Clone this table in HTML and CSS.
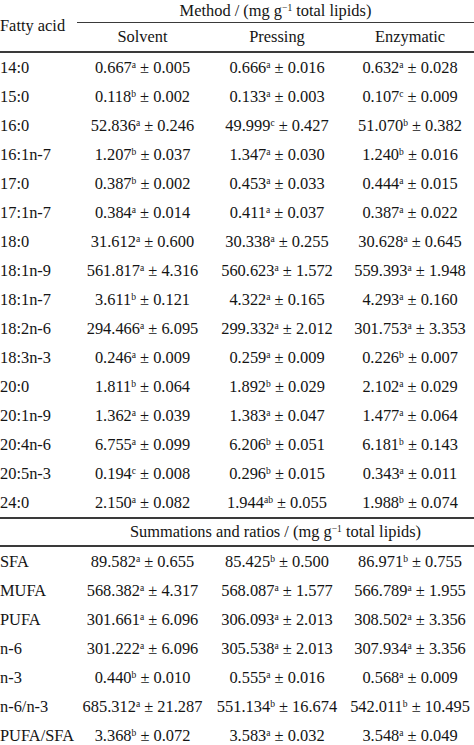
FILE: index.html
```html
<!DOCTYPE html>
<html lang="en">
<head>
<meta charset="utf-8">
<title>Fatty acid composition</title>
<link rel="stylesheet" href="styles.css">
</head>
<body>
<table class="fa-table">
  <colgroup>
    <col class="c-name">
    <col class="c-solvent">
    <col class="c-pressing">
    <col class="c-enzymatic">
  </colgroup>
  <thead>
    <tr class="head-1">
      <th rowspan="2" class="name-head">Fatty acid</th>
      <th colspan="3" class="method-head">Method / (mg g<sup>−1</sup> total lipids)</th>
    </tr>
    <tr class="head-2">
      <th>Solvent</th>
      <th>Pressing</th>
      <th>Enzymatic</th>
    </tr>
  </thead>
  <tbody>
    <tr><td>14:0</td><td>0.667<sup>a</sup> ± 0.005</td><td>0.666<sup>a</sup> ± 0.016</td><td>0.632<sup>a</sup> ± 0.028</td></tr>
    <tr><td>15:0</td><td>0.118<sup>b</sup> ± 0.002</td><td>0.133<sup>a</sup> ± 0.003</td><td>0.107<sup>c</sup> ± 0.009</td></tr>
    <tr><td>16:0</td><td>52.836<sup>a</sup> ± 0.246</td><td>49.999<sup>c</sup> ± 0.427</td><td>51.070<sup>b</sup> ± 0.382</td></tr>
    <tr><td>16:1n-7</td><td>1.207<sup>b</sup> ± 0.037</td><td>1.347<sup>a</sup> ± 0.030</td><td>1.240<sup>b</sup> ± 0.016</td></tr>
    <tr><td>17:0</td><td>0.387<sup>b</sup> ± 0.002</td><td>0.453<sup>a</sup> ± 0.033</td><td>0.444<sup>a</sup> ± 0.015</td></tr>
    <tr><td>17:1n-7</td><td>0.384<sup>a</sup> ± 0.014</td><td>0.411<sup>a</sup> ± 0.037</td><td>0.387<sup>a</sup> ± 0.022</td></tr>
    <tr><td>18:0</td><td>31.612<sup>a</sup> ± 0.600</td><td>30.338<sup>a</sup> ± 0.255</td><td>30.628<sup>a</sup> ± 0.645</td></tr>
    <tr><td>18:1n-9</td><td>561.817<sup>a</sup> ± 4.316</td><td>560.623<sup>a</sup> ± 1.572</td><td>559.393<sup>a</sup> ± 1.948</td></tr>
    <tr><td>18:1n-7</td><td>3.611<sup>b</sup> ± 0.121</td><td>4.322<sup>a</sup> ± 0.165</td><td>4.293<sup>a</sup> ± 0.160</td></tr>
    <tr><td>18:2n-6</td><td>294.466<sup>a</sup> ± 6.095</td><td>299.332<sup>a</sup> ± 2.012</td><td>301.753<sup>a</sup> ± 3.353</td></tr>
    <tr><td>18:3n-3</td><td>0.246<sup>a</sup> ± 0.009</td><td>0.259<sup>a</sup> ± 0.009</td><td>0.226<sup>b</sup> ± 0.007</td></tr>
    <tr><td>20:0</td><td>1.811<sup>b</sup> ± 0.064</td><td>1.892<sup>b</sup> ± 0.029</td><td>2.102<sup>a</sup> ± 0.029</td></tr>
    <tr><td>20:1n-9</td><td>1.362<sup>a</sup> ± 0.039</td><td>1.383<sup>a</sup> ± 0.047</td><td>1.477<sup>a</sup> ± 0.064</td></tr>
    <tr><td>20:4n-6</td><td>6.755<sup>a</sup> ± 0.099</td><td>6.206<sup>b</sup> ± 0.051</td><td>6.181<sup>b</sup> ± 0.143</td></tr>
    <tr><td>20:5n-3</td><td>0.194<sup>c</sup> ± 0.008</td><td>0.296<sup>b</sup> ± 0.015</td><td>0.343<sup>a</sup> ± 0.011</td></tr>
    <tr class="last-row"><td>24:0</td><td>2.150<sup>a</sup> ± 0.082</td><td>1.944<sup>ab</sup> ± 0.055</td><td>1.988<sup>b</sup> ± 0.074</td></tr>
    <tr class="section-row"><td></td><td colspan="3">Summations and ratios / (mg g<sup>−1</sup> total lipids)</td></tr>
    <tr><td>SFA</td><td>89.582<sup>a</sup> ± 0.655</td><td>85.425<sup>b</sup> ± 0.500</td><td>86.971<sup>b</sup> ± 0.755</td></tr>
    <tr><td>MUFA</td><td>568.382<sup>a</sup> ± 4.317</td><td>568.087<sup>a</sup> ± 1.577</td><td>566.789<sup>a</sup> ± 1.955</td></tr>
    <tr><td>PUFA</td><td>301.661<sup>a</sup> ± 6.096</td><td>306.093<sup>a</sup> ± 2.013</td><td>308.502<sup>a</sup> ± 3.356</td></tr>
    <tr><td>n-6</td><td>301.222<sup>a</sup> ± 6.096</td><td>305.538<sup>a</sup> ± 2.013</td><td>307.934<sup>a</sup> ± 3.356</td></tr>
    <tr><td>n-3</td><td>0.440<sup>b</sup> ± 0.010</td><td>0.555<sup>a</sup> ± 0.016</td><td>0.568<sup>a</sup> ± 0.009</td></tr>
    <tr><td>n-6/n-3</td><td>685.312<sup>a</sup> ± 21.287</td><td>551.134<sup>b</sup> ± 16.674</td><td>542.011<sup>b</sup> ± 10.495</td></tr>
    <tr><td>PUFA/SFA</td><td>3.368<sup>b</sup> ± 0.072</td><td>3.583<sup>a</sup> ± 0.032</td><td>3.548<sup>a</sup> ± 0.049</td></tr>
  </tbody>
</table>
</body>
</html>
```

FILE: styles.css
```css
html, body {
  margin: 0;
  padding: 0;
  background: #ffffff;
  overflow: hidden;
}

.fa-table {
  width: 474px;
  table-layout: fixed;
  border-collapse: separate;
  border-spacing: 0;
  font-family: "Liberation Serif", "Times New Roman", serif;
  font-size: 16.4px;
  color: #141414;
}

.c-name { width: 77px; }
.c-solvent { width: 131px; }
.c-pressing { width: 138px; }
.c-enzymatic { width: 128px; }

.fa-table th,
.fa-table td {
  box-sizing: border-box;
  padding: 0;
  font-weight: normal;
  text-align: center;
  vertical-align: middle;
  white-space: nowrap;
  line-height: 18px;
  height: 29px;
}

.fa-table td:first-child,
.fa-table th.name-head {
  text-align: left;
}

.head-1 th {
  height: 23px;
}

.method-head {
  border-bottom: 1px solid #3a3a3a;
  padding-bottom: 1px;
}

.name-head {
  border-bottom: 2px solid #3a3a3a;
  padding-top: 2px;
}

.head-2 th {
  height: 30px;
  border-bottom: 2px solid #3a3a3a;
}

.last-row td {
  height: 31px;
  border-bottom: 2px solid #3a3a3a;
}

.section-row td {
  height: 28px;
  border-bottom: 2px solid #3a3a3a;
}

.fa-table sup {
  font-size: 0.58em;
  line-height: 0;
  vertical-align: 0.55em;
}
```
